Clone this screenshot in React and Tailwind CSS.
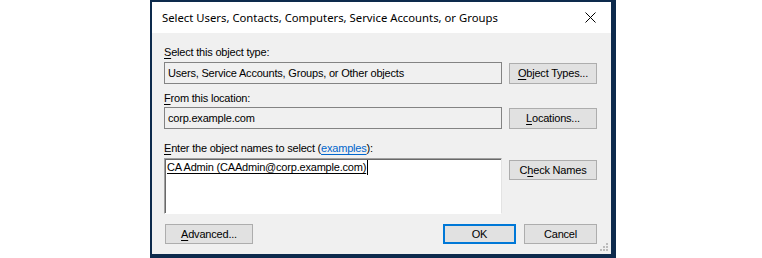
import React from "react";

const U = ({ children }) => <span className="underline underline-offset-[2px]">{children}</span>;

function Btn({ children, className = "", primary = false }) {
  return (
    <div
      className={
        "flex items-center justify-center bg-[#e1e1e1] text-[11px] text-black leading-none " +
        (primary ? "border-2 border-[#0078d7] " : "border border-[#adadad] ") +
        className
      }
    >
      {children}
    </div>
  );
}

export default function App() {
  return (
    <div
      className="w-[762px] h-[258px] bg-white overflow-hidden"
      style={{ fontFamily: '"Liberation Sans", Arial, sans-serif' }}
    >
      <div className="ml-[150px] w-[466px] h-[260px] bg-[#0d2a4c] pt-[2px] pl-[2px] pr-[5px] pb-[4px]">
        <div className="w-[459px] h-[252px] flex flex-col">
          {/* Title bar */}
          <div className="h-[31px] bg-white flex items-center pl-[10px] pr-[13px] shrink-0">
            <div
              className="flex-1 text-[11.3px] text-black leading-none"
              style={{ fontFamily: '"Noto Sans", "Open Sans", sans-serif' }}
            >
              Select Users, Contacts, Computers, Service Accounts, or Groups
            </div>
            <svg width="11" height="11" viewBox="0 0 11 11" className="mr-[2px]">
              <path d="M0.5 0.5 L10.5 10.5 M10.5 0.5 L0.5 10.5" stroke="#000" strokeWidth="1" fill="none" />
            </svg>
          </div>
          {/* Content */}
          <div className="relative flex-1 bg-[#f0f0f0] pl-[12px] pr-[14px] pt-[12px] flex flex-col text-[11px] tracking-[-0.2px] text-black">
            <div className="h-[14px] leading-[14px]">
              <U>S</U>elect this object type:
            </div>
            <div className="mt-[3px] flex items-center gap-[7px]">
              <div className="w-[338px] h-[22px] border border-[#838383] bg-[#f0f0f0] flex items-center pl-[3px]">
                Users, Service Accounts, Groups, or Other objects
              </div>
              <Btn className="w-[88px] h-[21px]">
                <U>O</U>bject Types...
              </Btn>
            </div>

            <div className="mt-[7px] h-[14px] leading-[14px]">
              <U>F</U>rom this location:
            </div>
            <div className="mt-[2px] flex items-center gap-[7px]">
              <div className="w-[338px] h-[22px] border border-[#838383] bg-[#f0f0f0] flex items-center pl-[3px]">
                corp.example.com
              </div>
              <Btn className="w-[88px] h-[21px]">
                <U>L</U>ocations...
              </Btn>
            </div>

            <div className="mt-[12px] h-[14px] leading-[14px]">
              <U>E</U>nter the object names to select (
              <span className="text-[#0066cc] underline underline-offset-[2px]">examples</span>):
            </div>
            <div className="mt-[3px] flex items-start gap-[7px]">
              <div className="w-[338px] h-[56px] bg-white border border-t-[#a0a0a0] border-l-[#a0a0a0] border-r-[#e3e3e3] border-b-[#ffffff] shadow-[inset_1px_1px_0_#696969] pl-[2px] pt-[2px]">
                <div className="flex items-start">
                  <span className="underline underline-offset-[2px] leading-[13px]">
                    CA Admin (CAAdmin@corp.example.com)
                  </span>
                  <span className="w-[1px] h-[15px] bg-black ml-[1px] -mt-[1px]" />
                </div>
              </div>
              <Btn className="mt-[2px] w-[88px] h-[20px]">
                C<span className="underline underline-offset-[2px]">h</span>eck Names
              </Btn>
            </div>

            <div className="mt-[10px] flex items-center">
              <Btn className="ml-[1px] w-[88px] h-[20px]">
                <U>A</U>dvanced...
              </Btn>
              <div className="flex-1" />
              <Btn primary className="w-[73px] h-[20px]">
                OK
              </Btn>
              <Btn className="ml-[8px] w-[73px] h-[20px]">Cancel</Btn>
            </div>

            <svg width="9" height="9" viewBox="0 0 9 9" className="absolute right-[2px] bottom-[2px]">
              <rect x="6" y="0" width="2" height="2" fill="#bcbcbc" />
              <rect x="3" y="3" width="2" height="2" fill="#bcbcbc" />
              <rect x="6" y="3" width="2" height="2" fill="#bcbcbc" />
              <rect x="0" y="6" width="2" height="2" fill="#bcbcbc" />
              <rect x="3" y="6" width="2" height="2" fill="#bcbcbc" />
              <rect x="6" y="6" width="2" height="2" fill="#bcbcbc" />
            </svg>
          </div>
        </div>
      </div>
    </div>
  );
}
